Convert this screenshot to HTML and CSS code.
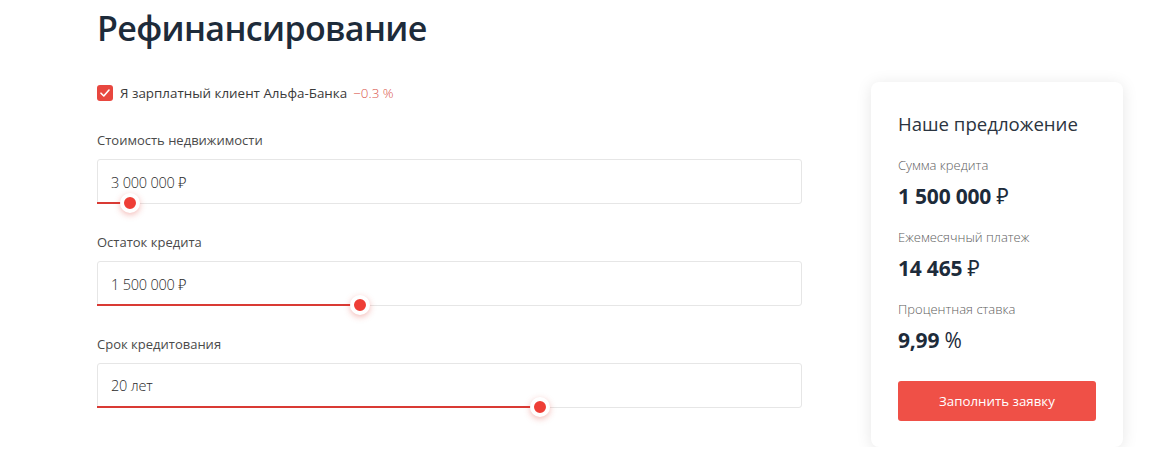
FILE: index.html
```html
<!DOCTYPE html>
<html lang="ru">
<head>
<meta charset="utf-8">
<link rel="stylesheet" href="styles.css">
</head>
<body>
<div class="page">
  <h1 class="title">Рефинансирование</h1>
  <div class="layout">
    <div class="form">
      <label class="check">
        <span class="box"><svg width="10" height="8" viewBox="0 0 10 8"><path d="M1 4.2 L3.8 7 L9 1" fill="none" stroke="#fff" stroke-width="1.6" stroke-linecap="round" stroke-linejoin="round"/></svg></span>
        <span class="check-text">Я зарплатный клиент Альфа-Банка</span>
        <span class="discount">−0.3 %</span>
      </label>

      <div class="field">
        <div class="field-label">Стоимость недвижимости</div>
        <div class="input">
          <span class="value">3 000 000 ₽</span>
          <div class="track"><div class="fill" style="width:33px"></div><div class="thumb" style="left:33px"></div></div>
        </div>
      </div>

      <div class="field">
        <div class="field-label">Остаток кредита</div>
        <div class="input">
          <span class="value">1 500 000 ₽</span>
          <div class="track"><div class="fill" style="width:263px"></div><div class="thumb" style="left:263px"></div></div>
        </div>
      </div>

      <div class="field">
        <div class="field-label">Срок кредитования</div>
        <div class="input">
          <span class="value">20 лет</span>
          <div class="track"><div class="fill" style="width:443px"></div><div class="thumb" style="left:443px"></div></div>
        </div>
      </div>
    </div>

    <div class="card">
      <div class="card-title">Наше предложение</div>
      <div class="stat">
        <div class="stat-label">Сумма кредита</div>
        <div class="stat-value">1 500 000 <span class="unit">₽</span></div>
      </div>
      <div class="stat">
        <div class="stat-label">Ежемесячный платеж</div>
        <div class="stat-value">14 465 <span class="unit">₽</span></div>
      </div>
      <div class="stat">
        <div class="stat-label">Процентная ставка</div>
        <div class="stat-value">9,99 <span class="unit">%</span></div>
      </div>
      <button class="btn">Заполнить заявку</button>
    </div>
  </div>
</div>
</body>
</html>
```

FILE: styles.css
```css
* { box-sizing: border-box; }
html, body { margin: 0; padding: 0; background: #fff; }
body {
  font-family: "Open Sans", "Noto Sans", sans-serif;
  color: #333;
}
.page {
  padding: 6px 0 0 97px;
}
.title {
  margin: 0;
  font-size: 34px;
  font-weight: 600;
  line-height: 44px;
  color: #1d2b3a;
  letter-spacing: -0.65px;
}
.layout {
  display: flex;
  align-items: flex-start;
  gap: 69px;
  margin-top: 32px;
}
.form {
  width: 705px;
  padding-top: 3px;
}
.check {
  display: flex;
  align-items: center;
  height: 16px;
  font-size: 13.4px;
  color: #3a3a3a;
}
.box {
  width: 16px;
  height: 16px;
  border-radius: 3px;
  background: #e8473f;
  display: flex;
  align-items: center;
  justify-content: center;
  margin-right: 7px;
}
.discount {
  color: #d9534a;
  margin-left: 6px;
  font-weight: 300;
}
.field {
  margin-top: 30px;
}
.field + .field {
  margin-top: 29px;
}
.field-label {
  font-size: 13px;
  line-height: 18px;
  color: #4a4a4a;
}
.input {
  position: relative;
  margin-top: 10px;
  height: 45px;
  border: 1px solid #e6e6e6;
  border-radius: 3px;
  display: flex;
  align-items: center;
  padding-left: 13px;
}
.value {
  font-size: 14.5px;
  font-weight: 300;
  color: #2a2a2a;
  letter-spacing: -0.2px;
}
.track {
  position: absolute;
  left: -1px;
  right: -1px;
  bottom: -1px;
  height: 2px;
}
.fill {
  height: 2px;
  background: #d93a34;
}
.thumb {
  position: absolute;
  top: 1px;
  width: 20px;
  height: 20px;
  margin: -10px 0 0 -10px;
  border-radius: 50%;
  background: #ee3e36;
  border: 4px solid #fff;
  box-shadow: 0 2px 6px rgba(220, 60, 50, 0.35);
}
.card {
  width: 252px;
  background: #fff;
  border-radius: 8px;
  box-shadow: 0 2px 16px rgba(0, 0, 0, 0.1);
  padding: 28px 27px 26px;
}
.card-title {
  font-size: 18.6px;
  line-height: 28px;
  color: #2b3440;
  margin-bottom: 2px;
}
.stat {
  margin-top: 18px;
}
.stat-label {
  font-size: 13px;
  line-height: 18px;
  color: #5e5e5e;
  font-weight: 300;
}
.stat-value {
  font-size: 21px;
  font-weight: 700;
  line-height: 28px;
  margin-top: 8px;
  color: #1d2b3a;
  letter-spacing: -0.2px;
}
.stat-value .unit {
  font-weight: 400;
}
.btn {
  display: block;
  width: 198px;
  height: 40px;
  margin-top: 27px;
  border: 0;
  border-radius: 3px;
  background: #ef5047;
  color: #fff;
  font-family: inherit;
  font-size: 13.3px;
}
```
